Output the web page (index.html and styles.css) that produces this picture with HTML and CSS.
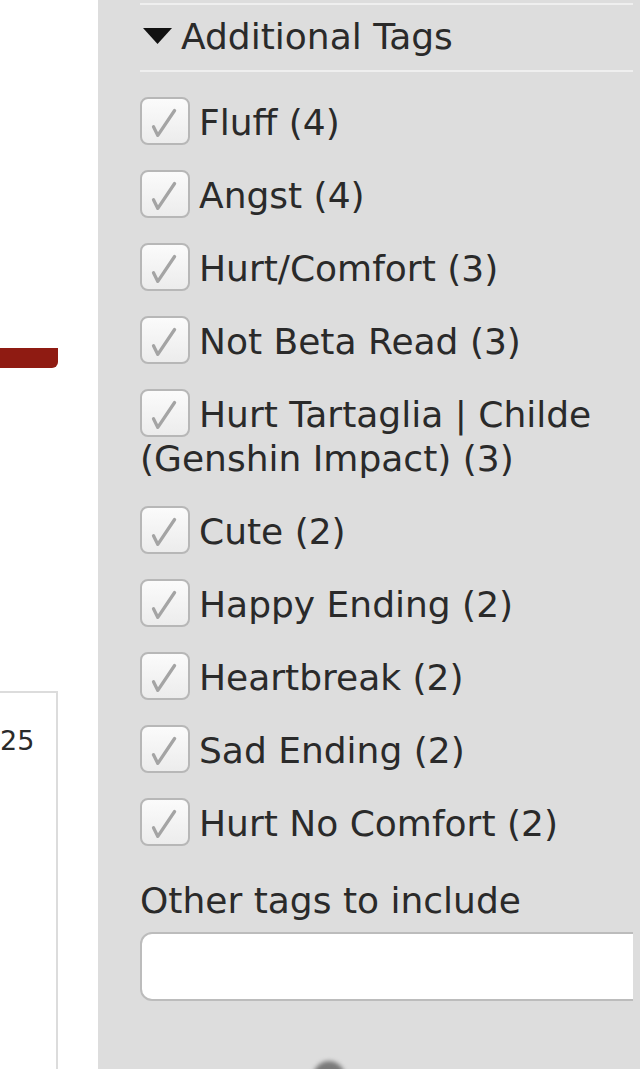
FILE: index.html
```html
<!DOCTYPE html>
<html lang="en">
<head>
<meta charset="utf-8">
<title>Additional Tags</title>
<link rel="stylesheet" href="styles.css">
</head>
<body>
<div class="page">
  <main class="main">
    <div class="red-bar"></div>
    <div class="work-box">
      <p class="date">25</p>
    </div>
  </main>
  <aside class="sidebar">
    <div class="inner">
      <div class="rule-top"></div>
      <h3 class="heading">
        <svg class="tri" width="29" height="16" viewBox="0 0 29 16"><path d="M0 0 H29 L14.5 16 Z" fill="#111"/></svg>
        <span>Additional Tags</span>
      </h3>
      <ul class="tags">
        <li><span class="cb"><svg viewBox="0 0 48 48" width="46" height="46"><path d="M12 29 L16.5 38 L34 12" fill="none" stroke="#a4a4a4" stroke-width="3.4" stroke-linecap="round" stroke-linejoin="round"/></svg></span>Fluff (4)</li>
        <li><span class="cb"><svg viewBox="0 0 48 48" width="46" height="46"><path d="M12 29 L16.5 38 L34 12" fill="none" stroke="#a4a4a4" stroke-width="3.4" stroke-linecap="round" stroke-linejoin="round"/></svg></span>Angst (4)</li>
        <li><span class="cb"><svg viewBox="0 0 48 48" width="46" height="46"><path d="M12 29 L16.5 38 L34 12" fill="none" stroke="#a4a4a4" stroke-width="3.4" stroke-linecap="round" stroke-linejoin="round"/></svg></span>Hurt/Comfort (3)</li>
        <li><span class="cb"><svg viewBox="0 0 48 48" width="46" height="46"><path d="M12 29 L16.5 38 L34 12" fill="none" stroke="#a4a4a4" stroke-width="3.4" stroke-linecap="round" stroke-linejoin="round"/></svg></span>Not Beta Read (3)</li>
        <li><span class="cb"><svg viewBox="0 0 48 48" width="46" height="46"><path d="M12 29 L16.5 38 L34 12" fill="none" stroke="#a4a4a4" stroke-width="3.4" stroke-linecap="round" stroke-linejoin="round"/></svg></span>Hurt Tartaglia | Childe (Genshin Impact) (3)</li>
        <li><span class="cb"><svg viewBox="0 0 48 48" width="46" height="46"><path d="M12 29 L16.5 38 L34 12" fill="none" stroke="#a4a4a4" stroke-width="3.4" stroke-linecap="round" stroke-linejoin="round"/></svg></span>Cute (2)</li>
        <li><span class="cb"><svg viewBox="0 0 48 48" width="46" height="46"><path d="M12 29 L16.5 38 L34 12" fill="none" stroke="#a4a4a4" stroke-width="3.4" stroke-linecap="round" stroke-linejoin="round"/></svg></span>Happy Ending (2)</li>
        <li><span class="cb"><svg viewBox="0 0 48 48" width="46" height="46"><path d="M12 29 L16.5 38 L34 12" fill="none" stroke="#a4a4a4" stroke-width="3.4" stroke-linecap="round" stroke-linejoin="round"/></svg></span>Heartbreak (2)</li>
        <li><span class="cb"><svg viewBox="0 0 48 48" width="46" height="46"><path d="M12 29 L16.5 38 L34 12" fill="none" stroke="#a4a4a4" stroke-width="3.4" stroke-linecap="round" stroke-linejoin="round"/></svg></span>Sad Ending (2)</li>
        <li><span class="cb"><svg viewBox="0 0 48 48" width="46" height="46"><path d="M12 29 L16.5 38 L34 12" fill="none" stroke="#a4a4a4" stroke-width="3.4" stroke-linecap="round" stroke-linejoin="round"/></svg></span>Hurt No Comfort (2)</li>
      </ul>
      <label class="other-label">Other tags to include</label>
      <div class="input"></div>
      <div class="knob-row"><span class="knob"></span></div>
    </div>
  </aside>
</div>
</body>
</html>
```

FILE: styles.css
```css
html, body {
  margin: 0;
  padding: 0;
  background: #ffffff;
}
body {
  font-family: "DejaVu Sans", Verdana, sans-serif;
  color: #2a2a2a;
  overflow: hidden;
}
.page {
  display: flex;
  height: 1069px;
  overflow: hidden;
}
.main {
  width: 98px;
  flex: none;
  background: #fff;
  overflow: hidden;
}
.red-bar {
  margin-top: 348px;
  width: 58px;
  height: 20px;
  background: #8f1b12;
  border-bottom-right-radius: 6px;
}
.work-box {
  margin-top: 323px;
  width: 58px;
  height: 400px;
  border-top: 2px solid #dcdcdc;
  border-right: 2px solid #dcdcdc;
  box-sizing: border-box;
  overflow: hidden;
}
.date {
  margin: 0;
  padding-top: 31px;
  font-size: 27px;
  line-height: 34px;
  color: #2a2a2a;
}
.sidebar {
  flex: 1;
  background: #dddddd;
  padding: 0 7px 0 42px;
  overflow: hidden;
}
.inner {
  overflow: hidden;
}
.rule-top {
  margin-top: 3px;
  height: 2px;
  background: #efefef;
}
.heading {
  margin: 0;
  height: 65px;
  display: flex;
  align-items: center;
  gap: 9px;
  padding-left: 3px;
  font-size: 36px;
  font-weight: normal;
  border-bottom: 2px solid #efefef;
}
.heading span {
  position: relative;
  top: -1px;
}
.tri {
  display: block;
  margin-top: -4px;
}
.tags {
  list-style: none;
  margin: 25px 0 0;
  padding: 0;
}
.tags li {
  font-size: 36px;
  line-height: 44px;
  margin-bottom: 25px;
}
.cb {
  display: inline-block;
  box-sizing: border-box;
  width: 50px;
  height: 48px;
  border: 2px solid #b7b7b7;
  border-radius: 8px;
  background: linear-gradient(#fbfbfb, #ececec);
  vertical-align: -10px;
  margin-right: 9px;
}
.cb svg {
  display: block;
}
.other-label {
  display: block;
  margin-top: 33px;
  font-size: 36px;
  line-height: 44px;
}
.input {
  margin-top: 9px;
  width: calc(100% + 20px);
  height: 69px;
  box-sizing: border-box;
  background: #fff;
  border: 2px solid #bcbcbc;
  border-radius: 12px;
}
.knob-row {
  margin-top: 60px;
  padding-left: 173px;
}
.knob {
  display: block;
  width: 32px;
  height: 32px;
  border-radius: 50%;
  background: #7a7a7a;
  filter: blur(2px);
}
```
